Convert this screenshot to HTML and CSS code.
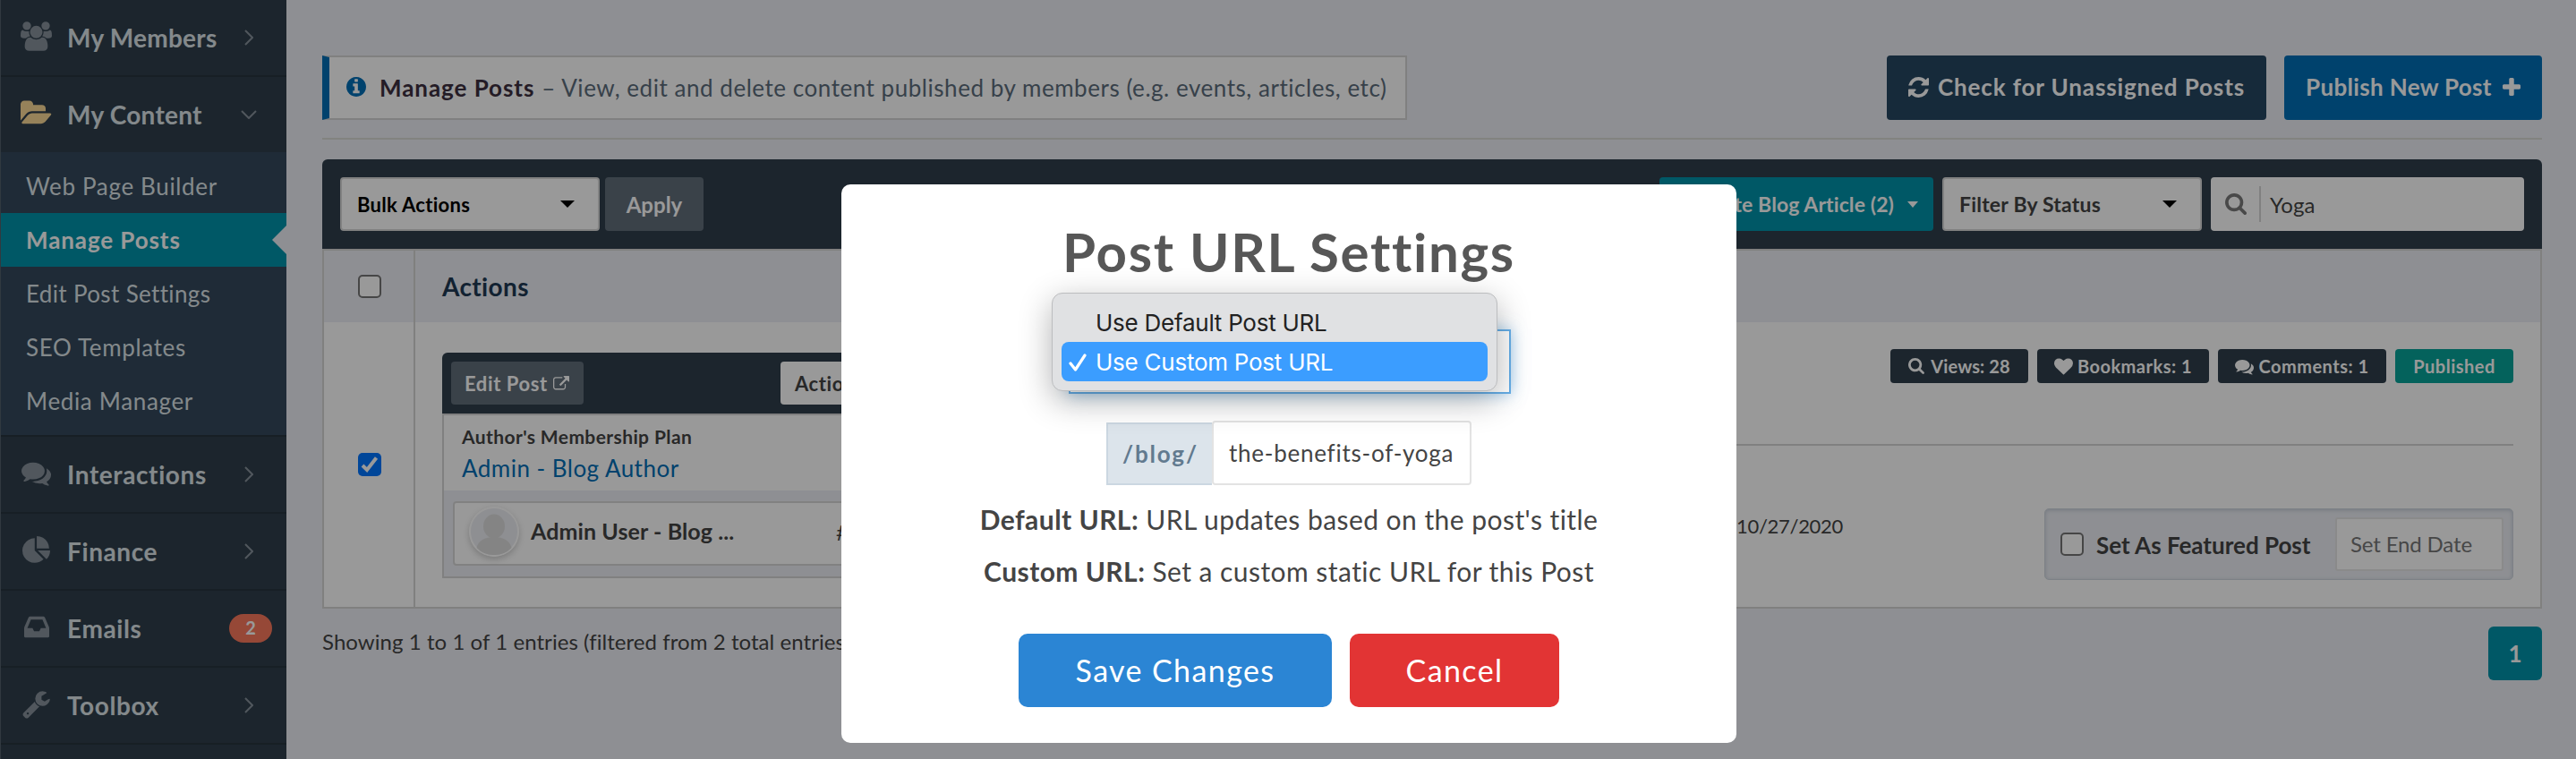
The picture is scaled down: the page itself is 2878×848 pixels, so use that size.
FILE: index.html
```html
<!DOCTYPE html>
<html lang="en">
<head>
    <meta charset="UTF-8">
    <meta name="viewport" content="width=device-width, initial-scale=1.0">
    <title>Manage Posts</title>
    <link rel="stylesheet" href="styles.css">
</head>

<body>
    <!-- Icons used more than once -->
    <svg class="sprite" width="0" height="0">
        <symbol id="i-right" viewBox="0 0 10 18"><path d="M1 1l8 8-8 8" fill="none" stroke="currentColor" stroke-width="2"/></symbol>
        <symbol id="i-comments" viewBox="0 0 1792 1792"><path d="M1408 768q0 139-94 257t-256.5 186.5-353.5 68.5q-86 0-176-16-124 88-278 128-36 9-86 16h-3q-11 0-20.5-8t-11.5-21q-1-3-1-6.5t.5-6.5 2-6l2.5-5 3.5-5.5 4-5 4.5-5 4-4.5q5-6 23-25t26-29.5 22.5-29 25-38.5 20.5-44q-124-72-195-177t-71-224q0-139 94-257t256.5-186.5 353.5-68.5 353.5 68.5 256.5 186.5 94 257zm384 256q0 120-71 224.5t-195 176.5q10 24 20.5 44t25 38.5 22.5 29 26 29.5 23 25q1 1 4 4.5t4.5 5 4 5 3.5 5.5l2.5 5 2 6 .5 6.5-1 6.5q-3 14-13 22t-22 7q-50-7-86-16-154-40-278-128-90 16-176 16-271 0-472-132 58 4 88 4 161 0 309-45t264-129q125-92 192-212t67-254q0-77-23-152 129 71 204 178t75 230z"/></symbol>
        <symbol id="i-search" viewBox="64 128 1664 1664"><path d="M1216 832q0-185-131.5-316.5t-316.5-131.5-316.5 131.5-131.5 316.5 131.5 316.5 316.5 131.5 316.5-131.5 131.5-316.5zm512 832q0 52-38 90t-90 38q-54 0-90-38l-343-342q-179 124-399 124-143 0-273.5-55.5t-225-150-150-225-55.5-273.5 55.5-273.5 150-225 225-150 273.5-55.5 273.5 55.5 225 150 150 225 55.5 273.5q0 220-124 399l343 343q37 37 37 90z"/></symbol>
    </svg>

    <div class="layout">
        <!-- Sidebar -->
        <nav class="sidebar">
            <a class="menu-item" href="#">
                <span class="menu-icon"><svg width="35" height="33" viewBox="0 0 1920 1792"><path d="M593 896q-162 5-265 128h-134q-82 0-138-40.5t-56-118.5q0-353 124-353 6 0 43.5 21t97.5 42.5 119 21.5q67 0 133-23-5 37-5 66 0 139 81 256zm1071 637q0 120-73 189.5t-194 69.5h-874q-121 0-194-69.5t-73-189.5q0-53 3.5-103.5t14-109 26.5-108.5 43-97.5 62-81 85.5-53.5 111.5-20q10 0 43 21.5t73 48 107 48 135 21.5 135-21.5 107-48 73-48 43-21.5q61 0 111.5 20t85.5 53.5 62 81 43 97.5 26.5 108.5 14 109 3.5 103.5zm-1024-1277q0 106-75 181t-181 75-181-75-75-181 75-181 181-75 181 75 75 181zm704 384q0 159-112.5 271.5t-271.5 112.5-271.5-112.5-112.5-271.5 112.5-271.5 271.5-112.5 271.5 112.5 112.5 271.5zm576 225q0 78-56 118.5t-138 40.5h-134q-103-123-265-128 81-117 81-256 0-29-5-66 66 23 133 23 59 0 119-21.5t97.5-42.5 43.5-21q124 0 124 353zm-128-609q0 106-75 181t-181 75-181-75-75-181 75-181 181-75 181 75 75 181z"/></svg></span>
                <span class="menu-label tight">My Members</span>
                <svg class="chevron" width="10" height="18"><use href="#i-right"/></svg>
            </a>
            <a class="menu-item open" href="#">
                <span class="menu-icon folder"><svg width="35" height="33" viewBox="0 0 1920 1792"><path d="M1879 952q0 31-31 66l-336 396q-43 51-120.5 86.5t-143.5 35.5h-1088q-34 0-60.5-13t-26.5-43q0-31 31-66l336-396q43-51 120.5-86.5t143.5-35.5h1088q34 0 60.5 13t26.5 43zm-343-344v160h-832q-94 0-197 47.5t-164 119.5l-337 396-5 6q0-4-.5-12.5t-.5-12.5v-960q0-92 66-158t158-66h320q92 0 158 66t66 158v32h544q92 0 158 66t66 158z"/></svg></span>
                <span class="menu-label tight">My Content</span>
                <svg class="chevron down" width="18" height="10" viewBox="0 0 18 10"><path d="M1 1l8 8 8-8" fill="none" stroke="currentColor" stroke-width="2"/></svg>
            </a>
            <div class="submenu">
                <a href="#">Web Page Builder</a>
                <a href="#" class="active">Manage Posts</a>
                <a href="#" class="tight">Edit Post Settings</a>
                <a href="#">SEO Templates</a>
                <a href="#">Media Manager</a>
            </div>
            <a class="menu-item" href="#">
                <span class="menu-icon"><svg width="33" height="33"><use href="#i-comments"/></svg></span>
                <span class="menu-label">Interactions</span>
                <svg class="chevron" width="10" height="18"><use href="#i-right"/></svg>
            </a>
            <a class="menu-item" href="#">
                <span class="menu-icon"><svg width="31" height="31" viewBox="0 0 1728 1728"><path d="M768 890l546 546q-106 108-247.5 168t-298.5 60q-209 0-385.5-103t-279.5-279.5-103-385.5 103-385.5 279.5-279.5 385.5-103v762zm187 6h773q0 157-60 298.5t-168 247.5zm709-128h-768v-768q209 0 385.5 103t279.5 279.5 103 385.5z"/></svg></span>
                <span class="menu-label">Finance</span>
                <svg class="chevron" width="10" height="18"><use href="#i-right"/></svg>
            </a>
            <a class="menu-item" href="#">
                <span class="menu-icon"><svg width="28" height="33" viewBox="0 0 1536 1792"><path d="M1023 960h316q-1-3-2.5-8.5t-2.5-7.5l-212-496h-708l-212 496q-1 3-2.5 8.5t-2.5 7.5h316l95 192h320zm513 30v482q0 26-19 45t-45 19h-1408q-26 0-45-19t-19-45v-482q0-62 25-123l238-552q10-25 36.5-42t52.5-17h832q26 0 52.5 17t36.5 42l238 552q25 61 25 123z"/></svg></span>
                <span class="menu-label">Emails</span>
                <span class="badge">2</span>
            </a>
            <a class="menu-item" href="#">
                <span class="menu-icon"><svg width="33" height="33" viewBox="0 0 1792 1792"><path d="M448 1472q0-26-19-45t-45-19-45 19-19 45 19 45 45 19 45-19 19-45zm644-420l-682 682q-37 37-90 37-52 0-91-37l-106-108q-38-36-38-90 0-53 38-91l681-681q39 98 114.5 173.5t173.5 114.5zm634-435q0 39-23 106-47 134-164.5 217.5t-258.5 83.5q-185 0-316.5-131.5t-131.5-316.5 131.5-316.5 316.5-131.5q58 0 121.5 16.5t107.5 46.5q16 11 16 28t-16 28l-293 169v224l193 107q5-3 79-48.5t135.5-81 70.5-35.5q15 0 23.5 10t8.5 25z"/></svg></span>
                <span class="menu-label">Toolbox</span>
                <svg class="chevron" width="10" height="18"><use href="#i-right"/></svg>
            </a>
            <div class="menu-item"></div>
        </nav>

        <!-- Main content -->
        <main class="content">
            <div class="page-head">
                <div class="notice">
                    <svg width="22" height="22" viewBox="128 128 1536 1536"><path d="M1152 1376v-160q0-14-9-23t-23-9h-96v-512q0-14-9-23t-23-9h-320q-14 0-23 9t-9 23v160q0 14 9 23t23 9h96v320h-96q-14 0-23 9t-9 23v160q0 14 9 23t23 9h448q14 0 23-9t9-23zm-128-896v-160q0-14-9-23t-23-9h-192q-14 0-23 9t-9 23v160q0 14 9 23t23 9h192q14 0 23-9t9-23zm640 416q0 209-103 385.5t-279.5 279.5-385.5 103-385.5-103-279.5-279.5-103-385.5 103-385.5 279.5-279.5 385.5-103 385.5 103 279.5 279.5 103 385.5z"/></svg>
                    <strong>Manage Posts</strong>
                    <span>&ndash; View, edit and delete content published by members (e.g. events, articles, etc)</span>
                </div>
                <div class="head-buttons">
                    <button class="btn btn-dark"><svg width="23" height="23" viewBox="128 128 1536 1536"><path d="M1639 1056q0 5-1 7-64 268-268 434.5t-478 166.5q-146 0-282.5-55t-243.5-157l-129 129q-19 19-45 19t-45-19-19-45v-448q0-26 19-45t45-19h448q26 0 45 19t19 45-19 45l-137 137q71 66 161 102t187 36q134 0 250-65t186-179q11-17 53-117 8-23 30-23h192q13 0 22.5 9.5t9.5 22.5zm25-800v448q0 26-19 45t-45 19h-448q-26 0-45-19t-19-45 19-45l138-138q-148-137-349-137-134 0-250 65t-186 179q-11 17-53 117-8 23-30 23h-199q-13 0-22.5-9.5t-9.5-22.5v-7q65-268 270-434.5t480-166.5q146 0 284 55.5t245 156.5l130-129q19-19 45-19t45 19 19 45z"/></svg>Check for Unassigned Posts</button>
                    <button class="btn btn-blue">Publish New Post<svg width="20" height="20" viewBox="192 128 1408 1408"><path d="M1600 736v192q0 40-28 68t-68 28h-416v416q0 40-28 68t-68 28h-192q-40 0-68-28t-28-68v-416h-416q-40 0-68-28t-28-68v-192q0-40 28-68t68-28h416v-416q0-40 28-68t68-28h192q40 0 68 28t28 68v416h416q40 0 68 28t28 68z"/></svg></button>
                </div>
            </div>

            <div class="toolbar">
                <div class="select bulk">Bulk Actions<i class="caret"></i></div>
                <button class="apply">Apply</button>
                <button class="create">Create Blog Article (2)<i class="caret"></i></button>
                <div class="select status">Filter By Status<i class="caret"></i></div>
                <div class="search">
                    <span class="search-icon"><svg width="24" height="24"><use href="#i-search"/></svg></span>
                    <span class="search-text">Yoga</span>
                </div>
            </div>

            <table class="posts">
                <tr class="posts-head">
                    <th class="check-col"><span class="checkbox"></span></th>
                    <th class="main-col">Actions</th>
                </tr>
                <tr class="posts-row">
                    <td class="check-col"><span class="checkbox checked"><svg width="26" height="26" viewBox="0 0 26 26"><path d="M5 14l5 5L20.500 5.500" fill="none" stroke="#fff" stroke-width="4"/></svg></span></td>
                    <td class="main-col">
                        <div class="post">
                            <div class="card">
                                <div class="card-head">
                                    <button class="edit">Edit Post<svg width="18" height="18" viewBox="0 64 1792 1472"><path d="M1408 928v320q0 119-84.500 203.500t-203.500 84.500h-832q-119 0-203.500-84.500t-84.500-203.500v-832q0-119 84.500-203.500t203.500-84.500h704q14 0 23 9t9 23v64q0 14-9 23t-23 9h-704q-66 0-113 47t-47 113v832q0 66 47 113t113 47h832q66 0 113-47t47-113v-320q0-14 9-23t23-9h64q14 0 23 9t9 23zm384-864v512q0 26-19 45t-45 19-45-19l-176-176-652 652q-10 10-23 10t-23-10l-114-114q-10-10-10-23t10-23l652-652-176-176q-19-19-19-45t19-45 45-19h512q26 0 45 19t19 45z"/></svg></button>
                                    <button class="actions">Actions<i class="caret"></i></button>
                                </div>
                                <div class="plan">
                                    <strong>Author's Membership Plan</strong>
                                    <a href="#">Admin - Blog Author</a>
                                </div>
                                <div class="card-foot">
                                    <div class="author">
                                        <svg class="avatar" width="56" height="56" viewBox="0 0 56 56"><circle cx="28" cy="28" r="27" fill="#edeef3" stroke="#fff" stroke-width="2"/><ellipse cx="28" cy="22" rx="12" ry="13.500" fill="#dcdcdc"/><path d="M8.500 46c2-8 9-12 19.500-12s17.500 4 19.500 12A26 26 0 0 1 28 54a26 26 0 0 1-19.500-8z" fill="#dcdcdc"/></svg>
                                        <strong>Admin User - Blog ...</strong>
                                        <span>#1</span>
                                    </div>
                                </div>
                            </div>
                            <div class="details">
                                <div class="tags">
                                    <span class="tag views"><svg width="18" height="18"><use href="#i-search"/></svg>Views: 28</span>
                                    <span class="tag bookmarks"><svg width="21" height="21" viewBox="0 0 1792 1792"><path d="M896 1664q-26 0-44-18l-624-602q-10-8-27.500-26t-55.500-65.500-68-97.500-53.500-121-23.500-138q0-220 127-344t351-124q62 0 126.500 21.500t120 58 95.500 68.500 76 68q36-36 76-68t95.500-68.500 120-58 126.500-21.500q224 0 351 124t127 344q0 221-229 450l-623 600q-18 18-44 18z"/></svg>Bookmarks: 1</span>
                                    <span class="tag comments"><svg width="21" height="21"><use href="#i-comments"/></svg>Comments: 1</span>
                                    <span class="tag published">Published</span>
                                </div>
                                <hr>
                                <div class="meta">
                                    <span class="date">10/27/2020</span>
                                    <div class="featured">
                                        <span class="checkbox"></span>
                                        <strong>Set As Featured Post</strong>
                                        <span class="end-date">Set End Date</span>
                                    </div>
                                </div>
                            </div>
                        </div>
                    </td>
                </tr>
            </table>

            <div class="table-foot">
                <span>Showing 1 to 1 of 1 entries (filtered from 2 total entries)</span>
                <a class="page" href="#">1</a>
            </div>
        </main>
    </div>

    <!-- Post URL modal -->
    <div class="overlay">
        <div class="modal">
            <h2>Post URL Settings</h2>
            <div class="url-select">
                <div class="options">
                    <div class="option">Use Default Post URL</div>
                    <div class="option selected"><svg width="20" height="22" viewBox="0 0 20 22"><path d="M2 12l5.500 7L18 3" fill="none" stroke="#fff" stroke-width="3.200" stroke-linecap="round" stroke-linejoin="round"/></svg>Use Custom Post URL</div>
                </div>
            </div>
            <div class="url-input">
                <span class="prefix">/blog/</span>
                <span class="slug">the-benefits-of-yoga</span>
            </div>
            <p class="help"><strong>Default URL:</strong> URL updates based on the post's title</p>
            <p class="help"><strong>Custom URL:</strong> Set a custom static URL for this Post</p>
            <div class="modal-buttons">
                <button class="save">Save Changes</button>
                <button class="cancel">Cancel</button>
            </div>
        </div>
    </div>
</body>
</html>
```
FILE: styles.css
```css
/* General Styles */
* {
    box-sizing: border-box;
}

body {
    margin: 0;
    height: 848px;
    overflow: hidden;
    background-color: #edeff5;
    font-family: Lato, sans-serif;
    font-size: 24px;
    color: #444;
}

a {
    text-decoration: none;
}

button {
    border: none;
    font-family: inherit;
    padding: 0;
}

svg {
    fill: currentColor;
    flex-shrink: 0;
}

.sprite {
    position: absolute;
}

.layout {
    display: flex;
    height: 848px;
    overflow: hidden;
}

/* Sidebar */
.sidebar {
    width: 320px;
    flex-shrink: 0;
    background-color: #2f3f4c;
    border-left: 1px solid #52606c;
}

.menu-item {
    display: flex;
    align-items: center;
    height: 86px;
    padding: 0 36px 0 19px;
    border-top: 2px solid #27343f;
    color: #dde4e8;
}

.menu-item:first-child {
    height: 84px;
    border-top: none;
}

.menu-icon {
    width: 41px;
    margin-right: 14px;
    display: flex;
    justify-content: center;
    color: #87919b;
}

.menu-icon svg {
    position: relative;
    top: -2px;
}

.menu-icon.folder {
    color: #fad996;
}

.menu-label {
    flex: 1;
    font-size: 28px;
    font-weight: 700;
    letter-spacing: 0.6px;
}

.menu-label.tight {
    letter-spacing: 0.25px;
}

.chevron {
    color: #87919b;
    margin-right: 1px;
}

.chevron.down {
    margin-right: -3px;
}

.badge {
    width: 48px;
    height: 32px;
    margin-right: -20px;
    border-radius: 16px;
    background-color: #fa785c;
    color: #fff;
    font-size: 20px;
    font-weight: 700;
    line-height: 31px;
    text-align: center;
}

.submenu {
    height: 316px;
    padding: 8px 0;
    background-color: #34485c;
}

.submenu a {
    display: block;
    padding-left: 28px;
    color: #dde4e8;
    font-size: 26px;
    line-height: 61px;
    height: 60px;
    letter-spacing: 0.65px;
}

.submenu a.tight {
    letter-spacing: 0.35px;
}

.submenu a.active {
    position: relative;
    background-color: #0093aa;
    color: #fff;
    font-weight: 700;
    letter-spacing: 0.9px;
}

.submenu a.active::after {
    content: "";
    position: absolute;
    right: 0;
    top: 14px;
    border: 16px solid transparent;
    border-left: none;
    border-right-color: #edeff5;
}

/* Page head */
.content {
    flex: 1;
    padding: 62px 38px 0 40px;
}

.page-head {
    display: flex;
    justify-content: space-between;
    height: 94px;
    margin-bottom: 22px;
    border-bottom: 2px solid #d9dad5;
}

.notice {
    display: flex;
    align-items: center;
    width: 1212px;
    height: 72px;
    padding-left: 19px;
    padding-bottom: 1px;
    background-color: #fff;
    border: 2px solid #d5d5d5;
    border-left: 8px solid #006eb6;
    font-size: 26px;
    color: #5d6d7c;
    white-space: nowrap;
    letter-spacing: 0.54px;
}

.notice svg {
    color: #006eb6;
    margin: -1px 15px 0 0;
}

.notice strong {
    color: #3c2f40;
    letter-spacing: 0.95px;
    margin-right: 8px;
}

.head-buttons {
    display: flex;
    gap: 20px;
}

.btn {
    display: flex;
    align-items: center;
    height: 72px;
    padding: 0 24px 2px;
    border-radius: 4px;
    color: #fff;
    font-size: 26px;
    font-weight: 700;
}

.btn-dark {
    width: 424px;
    background-color: #264661;
    gap: 10px;
    letter-spacing: 0.87px;
}

.btn-blue {
    width: 288px;
    background-color: #006eb6;
    gap: 12px;
    letter-spacing: 0.34px;
}

/* Toolbar */
.toolbar {
    display: flex;
    height: 100px;
    padding: 20px;
    background-color: #2f3f4c;
    border-radius: 6px 6px 0 0;
}

.caret {
    width: 0;
    height: 0;
    border: 8px solid transparent;
    border-top-color: #000;
    border-bottom: none;
}

.select {
    display: flex;
    align-items: center;
    justify-content: space-between;
    width: 290px;
    height: 60px;
    padding: 0 26px 0 17px;
    background-color: #fff;
    border: 2px solid #d8d8d8;
    border-radius: 4px;
    font-weight: 700;
}

.bulk {
    color: #000;
    font-size: 22px;
    letter-spacing: 0.3px;
}

.status {
    color: #444;
    font-size: 23px;
    letter-spacing: 0.2px;
    margin-right: 10px;
}

.apply {
    width: 110px;
    margin-left: 6px;
    border-radius: 4px;
    background-color: #616e7b;
    color: #fff;
    font-size: 24px;
    font-weight: 700;
}

.create {
    display: flex;
    align-items: center;
    justify-content: flex-end;
    width: 306px;
    margin: 0 10px 0 auto;
    padding-right: 17px;
    border-radius: 4px;
    background-color: #0093aa;
    color: #fff;
    font-size: 23px;
    font-weight: 700;
    letter-spacing: 0.1px;
}

.create .caret {
    margin-left: 15px;
    border-width: 7px 6.5px 0;
    border-top-color: #fff;
}

.search {
    display: flex;
    align-items: center;
    width: 350px;
    background-color: #fff;
    border-radius: 4px;
}

.search-icon {
    display: flex;
    align-items: center;
    width: 56px;
    height: 40px;
    padding-left: 16px;
    border-right: 2px solid #d5d5d5;
    color: #7a7a7a;
}

.search-text {
    padding-left: 10px;
}

/* Posts table */
.posts {
    width: 100%;
    border-spacing: 0;
    table-layout: fixed;
}

.posts th,
.posts td {
    padding: 0;
    border: 0 solid #d6d6d4;
}

.posts .check-col {
    width: 104px;
    border-left-width: 2px;
    border-right-width: 2px;
    text-align: center;
}

.posts .check-col .checkbox {
    margin: 0 auto;
    position: relative;
    left: 1px;
}

.posts .main-col {
    border-right-width: 2px;
    text-align: left;
}

.posts-head th {
    height: 82px;
    border-top-width: 2px;
}

.posts-head .main-col {
    padding-left: 30px;
    color: #1f3a54;
    font-size: 28px;
    letter-spacing: 0.37px;
}

.posts-row td {
    height: 320px;
    background-color: #fff;
    border-bottom-width: 2px;
}

.posts-row .main-col {
    vertical-align: top;
    padding: 30px 30px 0;
}

.checkbox {
    display: block;
    width: 26px;
    height: 26px;
    background-color: #fff;
    border: 2px solid #767676;
    border-radius: 5px;
}

.checkbox.checked {
    border: none;
    background-color: #0075ff;
}

.checkbox svg {
    display: block;
}

.post {
    display: flex;
    gap: 30px;
}

/* Actions card */
.card {
    width: 606px;
    height: 252px;
    margin-top: 4px;
}

.card-head {
    display: flex;
    justify-content: space-between;
    height: 68px;
    padding: 10px;
    background-color: #2f3f4c;
    border-radius: 6px 6px 0 0;
}

.card-head button {
    display: flex;
    align-items: center;
    height: 48px;
    border-radius: 4px;
    font-size: 22px;
    font-weight: 700;
    letter-spacing: 0.6px;
}

.edit {
    width: 148px;
    padding-left: 15px;
    gap: 6px;
    background-color: #616e7b;
    color: #fff;
}

.actions {
    width: 218px;
    padding: 0 16px;
    justify-content: space-between;
    background-color: #fff;
    color: #444;
}

.plan {
    display: flex;
    flex-direction: column;
    height: 86px;
    padding: 6px 20px 0;
    border: 2px solid #d5d5d5;
    border-bottom: none;
}

.plan strong {
    font-size: 21px;
    line-height: 36px;
    letter-spacing: 0.4px;
}

.plan a {
    color: #006eb6;
    font-size: 26px;
    line-height: 34px;
    letter-spacing: 0.48px;
}

.card-foot {
    height: 98px;
    padding: 12px 10px;
    background-color: #edeff5;
    border: 2px solid #d5d5d5;
    border-top: none;
}

.author {
    display: flex;
    align-items: center;
    height: 72px;
    padding: 0 0 4px 16px;
    background-color: #fff;
    border: 2px solid #d8d8d8;
    border-radius: 4px;
}

.avatar {
    border-radius: 50%;
    box-shadow: 0 3px 7px rgba(0, 0, 0, 0.2);
}

.author strong {
    width: 341px;
    margin: -2px 0 0 13px;
    font-size: 25px;
    letter-spacing: 0.1px;
}

/* Post details */
.details {
    flex: 1;
}

.tags {
    display: flex;
    justify-content: flex-end;
    gap: 10px;
}

.tag {
    display: flex;
    align-items: center;
    justify-content: center;
    height: 38px;
    border-radius: 4px;
    background-color: #2f3f4c;
    color: #fff;
    font-size: 20px;
    font-weight: 700;
    letter-spacing: 0.5px;
    gap: 5px;
}

.views {
    width: 154px;
    letter-spacing: 0.1px;
    gap: 7px;
}

.bookmarks {
    width: 192px;
}

.comments {
    width: 188px;
}

.published {
    width: 132px;
    background-color: #08a399;
}

.details hr {
    margin: 68px 0 70px;
    border: none;
    border-top: 2px solid #d5d5d5;
}

.meta {
    display: flex;
    justify-content: flex-end;
    align-items: flex-start;
}

.date {
    width: 344px;
    padding-top: 7px;
    font-size: 22px;
    line-height: 26px;
    letter-spacing: -0.3px;
}

.featured {
    display: flex;
    align-items: center;
    width: 524px;
    height: 80px;
    padding: 0 10px 0 17px;
    background-color: #edeff5;
    border: 1px solid #d0d8e0;
    border-radius: 5px;
    box-shadow: inset 0 1px 4px rgba(60, 90, 120, 0.25);
}

.featured .checkbox {
    margin-right: 14px;
}

.featured strong {
    font-size: 26px;
    padding-top: 2px;
}

.end-date {
    width: 188px;
    height: 60px;
    margin-left: auto;
    padding-left: 15px;
    background-color: #fff;
    border: 2px solid #e6e6e6;
    border-radius: 3px;
    color: #777;
    line-height: 55px;
    letter-spacing: -0.15px;
}

/* Table footer */
.table-foot {
    display: flex;
    justify-content: space-between;
    padding-top: 20px;
}

.table-foot span {
    line-height: 34px;
    letter-spacing: 0.06px;
}

.page {
    width: 60px;
    height: 60px;
    border-radius: 6px;
    background-color: #0093aa;
    color: #fff;
    font-size: 26px;
    font-weight: 700;
    line-height: 60px;
    text-align: center;
}

/* Modal */
.overlay {
    position: fixed;
    inset: 0;
    display: flex;
    justify-content: center;
    padding: 206px 0 0 2px;
    background-color: rgba(0, 0, 0, 0.4);
}

.modal {
    display: flex;
    flex-direction: column;
    align-items: center;
    width: 1000px;
    height: 624px;
    padding-top: 40px;
    background-color: #fff;
    border-radius: 10px;
}

.modal h2 {
    margin: 0 0 52px;
    color: #575757;
    font-size: 60px;
    font-weight: 700;
    line-height: 70px;
    letter-spacing: 1.7px;
}

.url-select {
    position: relative;
    width: 494px;
    height: 72px;
    margin: 0 0 30px 2px;
    border: 2px solid #66afe9;
    box-shadow: 0 0 16px rgba(102, 175, 233, 0.6);
}

.options {
    position: absolute;
    left: -21px;
    top: -43px;
    width: 498px;
    height: 110px;
    padding: 10px;
    background-color: #e0e1e3;
    border: 1px solid #bcbdbf;
    border-radius: 12px;
    box-shadow: 0 10px 36px rgba(0, 0, 0, 0.3);
}

.option {
    position: relative;
    height: 44px;
    padding-left: 38px;
    border-radius: 8px;
    color: #222;
    font-family: Inter, sans-serif;
    font-size: 26px;
    line-height: 46px;
    letter-spacing: -0.25px;
}

.option.selected {
    background-color: #3b9dff;
    color: #fff;
}

.option svg {
    position: absolute;
    left: 8px;
    top: 12px;
}

.url-input {
    display: flex;
    align-items: flex-end;
    height: 72px;
    margin-bottom: 9px;
    font-size: 26px;
}

.prefix {
    width: 118px;
    height: 70px;
    padding-left: 16px;
    background-color: #dce4eb;
    border: 2px solid #cbd7e1;
    border-right: none;
    color: #627a8f;
    font-weight: 700;
    line-height: 66px;
    letter-spacing: 1.8px;
}

.slug {
    width: 290px;
    height: 72px;
    padding-left: 17px;
    border: 2px solid #e3e3e3;
    border-radius: 4px;
    line-height: 69px;
    letter-spacing: 0.75px;
}

.help {
    margin: 0;
    font-size: 30px;
    line-height: 58px;
    letter-spacing: 0.45px;
}

.modal-buttons {
    display: flex;
    gap: 20px;
    margin-top: 41px;
}

.modal-buttons button {
    height: 82px;
    padding-bottom: 2px;
    border-radius: 10px;
    color: #fff;
    font-size: 34px;
    letter-spacing: 1.4px;
}

.save {
    width: 350px;
    background-color: #2b85d4;
}

.cancel {
    width: 234px;
    background-color: #e23434;
}
```
